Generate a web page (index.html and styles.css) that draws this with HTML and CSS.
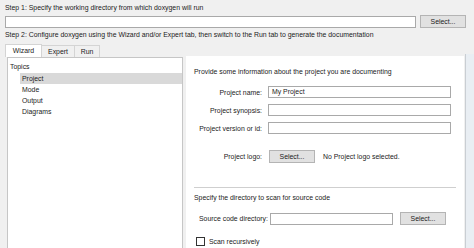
FILE: index.html
```html
<!DOCTYPE html>
<html lang="en">
<head>
    <meta charset="UTF-8">
    <title>Doxygen GUI frontend</title>
    <link rel="stylesheet" href="styles.css">
</head>
<body>
    <div class="window">
        <div class="step">Step 1: Specify the working directory from which doxygen will run</div>
        <div class="dir-row">
            <div class="field wide"></div>
            <button class="btn top-btn">Select...</button>
        </div>
        <div class="step step2">Step 2: Configure doxygen using the Wizard and/or Expert tab, then switch to the Run tab to generate the documentation</div>

        <div class="tabs">
            <div class="tab active">Wizard</div>
            <div class="tab">Expert</div>
            <div class="tab">Run</div>
        </div>

        <div class="pane">
            <div class="topics">
                <div class="topics-title">Topics</div>
                <div class="topic selected">Project</div>
                <div class="topic">Mode</div>
                <div class="topic">Output</div>
                <div class="topic">Diagrams</div>
            </div>

            <div class="page">
                <div class="intro">Provide some information about the project you are documenting</div>
                <div class="form">
                    <div class="label">Project name:</div>
                    <div class="field">My Project</div>
                    <div class="label">Project synopsis:</div>
                    <div class="field"></div>
                    <div class="label">Project version or id:</div>
                    <div class="field"></div>
                </div>
                <div class="logo-row">
                    <div class="label">Project logo:</div>
                    <button class="btn">Select...</button>
                    <span class="logo-note">No Project logo selected.</span>
                </div>
                <div class="separator"></div>
                <div class="intro">Specify the directory to scan for source code</div>
                <div class="src-row">
                    <div class="label">Source code directory:</div>
                    <div class="field src-field"></div>
                    <button class="btn">Select...</button>
                </div>
                <label class="check-row">
                    <span class="checkbox"></span>
                    Scan recursively
                </label>
            </div>

            <div class="scroll-strip"></div>
        </div>
    </div>
</body>
</html>
```

FILE: styles.css
```css
body {
    margin: 0;
    background: #f0f0f0;
    font-family: "Liberation Sans", Arial, sans-serif;
    font-size: 6.9px;
    color: #1b1b1b;
    overflow: hidden;
}
.window {
    width: 474px;
    height: 248px;
    overflow: hidden;
}
.step {
    padding: 3px 0 0 5px;
    height: 10px;
    line-height: 10px;
    white-space: nowrap;
}
.step2 {
    padding-top: 2px;
}
.dir-row {
    display: flex;
    align-items: center;
    gap: 4px;
    padding: 2px 0 0 5px;
    height: 13px;
}
.field {
    background: #fff;
    border: 1px solid #a9a9a9;
    line-height: 10px;
    padding-left: 3px;
    box-sizing: border-box;
    height: 12px;
}
.wide {
    width: 411px;
}
.btn {
    font: inherit;
    color: #1b1b1b;
    background: #e1e1e1;
    border: 1px solid #b4b4b4;
    height: 13px;
    width: 46px;
    padding: 0;
    line-height: 11px;
}
.top-btn {
    margin-top: -1px;
}
.tabs {
    display: flex;
    padding: 5px 0 0 5px;
    height: 12px;
    align-items: flex-end;
}
.tab {
    height: 11px;
    line-height: 11px;
    border: 1px solid #d4d4d4;
    border-bottom: none;
    margin-right: -1px;
    background: #f0f0f0;
    text-align: center;
    width: 32px;
}
.tab:last-child {
    width: 24px;
}
.tab.active {
    height: 12px;
    line-height: 12px;
    background: #fff;
    width: 35px;
}
.pane {
    display: flex;
    height: 200px;
    padding-left: 7px;
}
.topics {
    width: 174px;
    background: #fff;
    border: 1px solid #c6c6c6;
    border-bottom: none;
    padding-top: 3px;
}
.topics-title {
    padding-left: 2px;
    height: 12px;
    line-height: 11px;
}
.topic {
    margin-left: 12px;
    padding-left: 2px;
    height: 11px;
    line-height: 11px;
}
.topic.selected {
    background: #d9d9d9;
}
.page {
    width: 270px;
    margin-left: 3px;
    margin-top: -1px;
    background: #fff;
    padding: 11px 0 0 8px;
}
.intro {
    height: 10px;
    line-height: 10px;
    white-space: nowrap;
}
.form {
    display: grid;
    grid-template-columns: 68px 183px;
    column-gap: 6px;
    row-gap: 6px;
    margin-top: 9px;
    align-items: center;
}
.label {
    text-align: right;
    white-space: nowrap;
}
.logo-row {
    display: flex;
    align-items: center;
    margin-top: 16px;
    height: 13px;
}
.logo-row .label {
    width: 68px;
    margin-right: 7px;
}
.logo-note {
    margin-left: 8px;
}
.separator {
    border-top: 1px solid #cfcfcf;
    width: 262px;
    margin: 24px 0 5px;
}
.src-row {
    display: flex;
    align-items: center;
    margin-top: 9px;
    height: 13px;
}
.src-row .label {
    padding-left: 5px;
    width: 71px;
    text-align: left;
}
.src-field {
    width: 123px;
    margin-right: 7px;
}
.check-row {
    display: flex;
    align-items: center;
    gap: 4px;
    margin-top: 11px;
    padding-left: 2px;
    height: 10px;
}
.checkbox {
    width: 7px;
    height: 7px;
    border: 1px solid #333;
    background: #fff;
}
.scroll-strip {
    width: 8px;
    margin-left: 1px;
    margin-top: -3px;
    background: #e9eef3;
    border-left: 1px solid #c9ced3;
}
```
